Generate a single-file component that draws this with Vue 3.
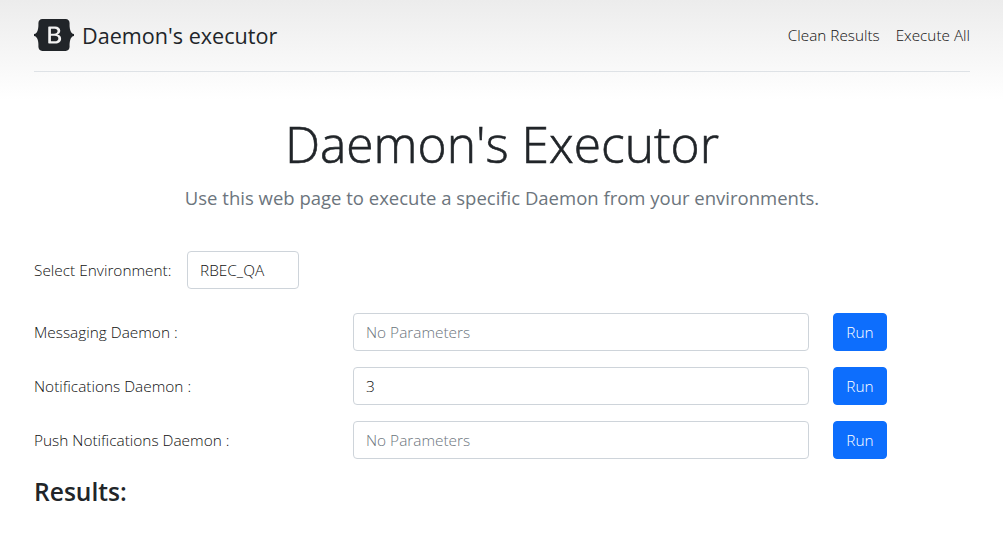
<script setup>
const daemons = [
  { name: 'Messaging Daemon :', value: '', placeholder: 'No Parameters' },
  { name: 'Notifications Daemon :', value: '3', placeholder: 'No Parameters' },
  { name: 'Push Notifications Daemon :', value: '', placeholder: 'No Parameters' },
]
</script>

<template>
  <div class="page">
    <div class="wrap">
      <header class="head">
        <a class="brand">
          <svg class="logo" viewBox="0 0 118 94" aria-hidden="true">
            <path fill="#212529" fill-rule="evenodd" clip-rule="evenodd" d="M24.509 0c-6.733 0-11.715 5.893-11.492 12.284.214 6.14-.064 14.092-2.066 20.577C8.943 39.365 5.547 43.485 0 44.014v5.972c5.547.529 8.943 4.649 10.951 11.153 2.002 6.485 2.28 14.437 2.066 20.577C12.794 88.106 17.776 94 24.51 94H93.5c6.733 0 11.714-5.893 11.491-12.284-.214-6.14.064-14.092 2.066-20.577 2.009-6.504 5.396-10.624 10.943-11.153v-5.972c-5.547-.529-8.934-4.649-10.943-11.153-2.002-6.484-2.28-14.437-2.066-20.577C105.214 5.893 100.233 0 93.5 0H24.508zM80 57.863C80 66.663 73.436 72 62.543 72H44a2 2 0 01-2-2V24a2 2 0 012-2h18.437c9.083 0 15.044 4.92 15.044 12.474 0 5.302-4.01 10.049-9.119 10.88v.277C75.317 46.394 80 51.21 80 57.863zM60.521 28.34H49.948v14.934h8.905c6.884 0 10.68-2.772 10.68-7.727 0-4.643-3.264-7.207-8.012-7.207zM49.948 49.2v16.458H60.91c7.167 0 10.964-2.876 10.964-8.281 0-5.406-3.903-8.178-11.425-8.178H49.948z"/>
          </svg>
          <span class="brand-text">Daemon's executor</span>
        </a>
        <nav class="nav">
          <a class="nav-link">Clean Results</a>
          <a class="nav-link">Execute All</a>
        </nav>
      </header>

      <section class="hero">
        <h1 class="title">Daemon's Executor</h1>
        <p class="lead">Use this web page to execute a specific Daemon from your environments.</p>
      </section>

      <div class="env">
        <label class="env-label">Select Environment:</label>
        <div class="select">RBEC_QA</div>
      </div>

      <div class="rows">
        <div v-for="d in daemons" :key="d.name" class="row">
          <label class="row-label">{{ d.name }}</label>
          <input class="field" :value="d.value" :placeholder="d.placeholder" />
          <button class="run" type="button">Run</button>
        </div>
      </div>

      <h3 class="results">Results:</h3>
    </div>
  </div>
</template>

<style>
html, body { margin: 0; background: #fff; }
</style>

<style scoped>
.page {
  height: 538px;
  overflow: hidden;
  background: linear-gradient(#ececec 0, #fff 100px) no-repeat;
  font-family: "Open Sans", "Noto Sans", sans-serif;
  color: #212529;
  font-size: 15.4px;
}
.wrap { padding: 0 33px 0 34px; }
.head {
  display: flex;
  align-items: center;
  justify-content: space-between;
  height: 70px;
  padding-bottom: 1px;
  border-bottom: 1px solid #dee2e6;
}
.brand { display: flex; align-items: center; gap: 8px; }
.logo { width: 40px; height: 32px; display: block; }
.brand-text { font-size: 21.6px; }
.nav { display: flex; gap: 16px; }
.nav-link { font-size: 15.3px; font-weight: 300; color: #111; }
.hero { text-align: center; padding-top: 41px; }
.title {
  margin: 0;
  font-size: 49.7px;
  line-height: 62px;
  font-weight: 300;
  color: #212529;
  -webkit-text-stroke: 0.6px #212529;
}
.lead { margin: 9px 0 0; font-size: 18.5px; line-height: 28px; font-weight: 400; color: #6c757d; }
.env { display: flex; align-items: center; margin-top: 39px; }
.env-label { width: 153px; font-weight: 300; color: #111; }
.select {
  box-sizing: border-box;
  width: 112px;
  height: 38px;
  padding: 0 12px;
  display: flex;
  align-items: center;
  border: 1px solid #ced4da;
  border-radius: 4px;
  font-weight: 300;
  color: #111;
}
.rows { display: flex; flex-direction: column; gap: 16px; margin-top: 24px; }
.row { display: flex; align-items: center; }
.row-label { width: 319px; font-weight: 300; color: #111; }
.field {
  box-sizing: border-box;
  width: 456px;
  height: 38px;
  padding: 0 12px;
  border: 1px solid #ced4da;
  border-radius: 4px;
  font: inherit;
  font-weight: 300;
  color: #111;
  background: #fff;
}
.field::placeholder { color: #6c757d; opacity: 1; }
.run {
  box-sizing: border-box;
  width: 54px;
  height: 38px;
  margin-left: 24px;
  border: 1px solid #0d6efd;
  border-radius: 4px;
  background: #0d6efd;
  color: #fff;
  font: inherit;
  font-weight: 300;
}
.results { margin: 16px 0 0; font-size: 24.6px; line-height: 34px; font-weight: 600; }
</style>
